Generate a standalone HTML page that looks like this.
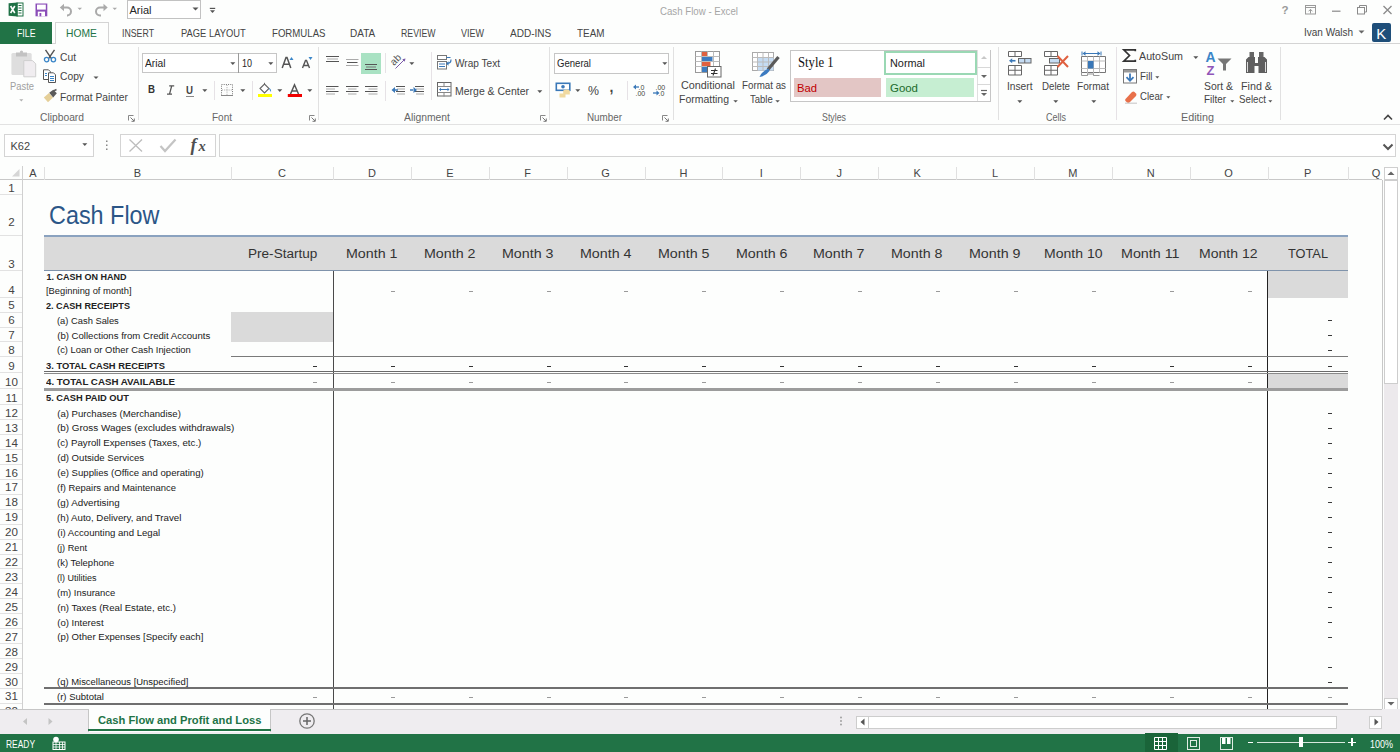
<!DOCTYPE html>
<html><head><meta charset="utf-8"><title>Cash Flow - Excel</title>
<style>
html,body{margin:0;padding:0;}
body{width:1400px;height:752px;position:relative;overflow:hidden;background:#fdfefd;font-family:'Liberation Sans',sans-serif;}
svg{overflow:visible}
</style></head><body>
<div style="position:absolute;left:660.00px;top:5.89px;line-height:11px;font-size:11px;font-family:'Liberation Sans',sans-serif;font-weight:normal;color:#a6a6a6;white-space:pre;transform:scaleX(0.8800);transform-origin:0 0;">Cash Flow - Excel</div>
<div style="position:absolute;left:127px;top:0px;width:74px;height:19px;box-sizing:border-box;border:1px solid #c2c2c2;background:#fff"></div>
<svg style="position:absolute;left:192px;top:7px" width="8" height="4" viewBox="0 0 8 4"><path d="M0.5 0.5h6l-3 3z" fill="#555"/></svg>
<svg style="position:absolute;left:8px;top:2px" width="16" height="15" viewBox="0 0 16 15"><rect x="9" y="1" width="6" height="13" fill="#fff" stroke="#1e7145" stroke-width="1"/><path d="M10.5 3.5h3M10.5 6h3M10.5 8.5h3M10.5 11h3" stroke="#1e7145" stroke-width="1.2"/><path d="M0.6 1.2 L9.6 0.4 V14.6 L0.6 13.8 Z" fill="#1e7145"/><path d="M2.6 4 L6.8 11 M6.8 4 L2.6 11" stroke="#fff" stroke-width="1.6"/></svg>
<svg style="position:absolute;left:35px;top:3px" width="13" height="14" viewBox="0 0 13 14"><path d="M0.5 0.5 H12.3 V13.3 H0.5 Z" fill="#8a4db8"/><rect x="2" y="1.6" width="8.8" height="5" fill="#fff"/><rect x="2.8" y="8.6" width="7.2" height="4.7" fill="#fff"/><rect x="4.5" y="10" width="1.8" height="3.3" fill="#8a4db8"/></svg>
<svg style="position:absolute;left:59px;top:3px" width="15" height="13" viewBox="0 0 15 13"><path d="M3 4.5 H8 A4 4 0 0 1 8 12.5 H9" fill="none" stroke="#aaa" stroke-width="2"/><path d="M0.8 4.5 L5 0.8 V8.2 Z" fill="#aaa"/></svg>
<svg style="position:absolute;left:77px;top:7px" width="6" height="4" viewBox="0 0 6 4"><path d="M0.5 0.8h4.5l-2.25 2.2z" fill="#aaa"/></svg>
<svg style="position:absolute;left:94px;top:3px" width="15" height="13" viewBox="0 0 15 13"><path d="M11 4.5 H6 A4 4 0 0 0 6 12.5 H7" fill="none" stroke="#aaa" stroke-width="2"/><path d="M13.7 4.5 L9.5 0.8 V8.2 Z" fill="#aaa"/></svg>
<svg style="position:absolute;left:112px;top:7px" width="6" height="4" viewBox="0 0 6 4"><path d="M0.5 0.8h4.5l-2.25 2.2z" fill="#aaa"/></svg>
<svg style="position:absolute;left:209px;top:7px" width="7" height="7" viewBox="0 0 7 7"><rect x="0.8" y="0.8" width="5.4" height="1.2" fill="#555"/><path d="M1 3.2h5l-2.5 2.8z" fill="#555"/></svg>
<svg style="position:absolute;left:1300px;top:3px" width="100" height="14" viewBox="0 0 100 14"><rect x="5.5" y="2.5" width="10" height="8.5" fill="none" stroke="#9a9a9a" stroke-width="1"/><path d="M5.5 4.5h10" stroke="#9a9a9a"/><path d="M10.5 10.5v-4M8.6 8.3l1.9-2 1.9 2" fill="none" stroke="#9a9a9a"/><path d="M32 8.2h8.5" stroke="#8a8a8a" stroke-width="1.2"/><rect x="57.5" y="4.5" width="7" height="6.5" fill="none" stroke="#8a8a8a"/><path d="M59.5 4.5v-2h7v6.5h-2" fill="none" stroke="#8a8a8a"/><path d="M83.5 3 L91.5 11 M91.5 3 L83.5 11" stroke="#8a8a8a" stroke-width="1.3"/></svg>
<div style="position:absolute;left:129.50px;top:4.69px;line-height:11px;font-size:11px;font-family:'Liberation Sans',sans-serif;font-weight:normal;color:#262626;white-space:pre;">Arial</div>
<div style="position:absolute;left:1281.48px;top:4.77px;line-height:11.5px;font-size:11.5px;font-family:'Liberation Sans',sans-serif;font-weight:bold;color:#9a9a9a;white-space:pre;">?</div>
<svg style="position:absolute;left:1358px;top:30px" width="8" height="4" viewBox="0 0 8 4"><path d="M0.5 0.5h6l-3 3z" fill="#666"/></svg>
<div style="position:absolute;left:0px;top:43px;width:1400px;height:1px;background:#d4d4d4"></div>
<div style="position:absolute;left:0px;top:22px;width:52px;height:21.5px;background:#217346"></div>
<div style="position:absolute;left:55px;top:22px;width:54px;height:22px;box-sizing:border-box;border:1px solid #d4d4d4;border-bottom:none;background:#fdfefd"></div>
<div style="position:absolute;left:16.50px;top:27.69px;line-height:11px;font-size:11px;font-family:'Liberation Sans',sans-serif;font-weight:normal;color:#fff;white-space:pre;transform:scaleX(0.7962);transform-origin:0 0;">FILE</div>
<div style="position:absolute;left:66.30px;top:27.69px;line-height:11px;font-size:11px;font-family:'Liberation Sans',sans-serif;font-weight:normal;color:#217346;white-space:pre;transform:scaleX(0.9333);transform-origin:0 0;">HOME</div>
<div style="position:absolute;left:122.30px;top:27.69px;line-height:11px;font-size:11px;font-family:'Liberation Sans',sans-serif;font-weight:normal;color:#444;white-space:pre;transform:scaleX(0.7972);transform-origin:0 0;">INSERT</div>
<div style="position:absolute;left:180.60px;top:27.69px;line-height:11px;font-size:11px;font-family:'Liberation Sans',sans-serif;font-weight:normal;color:#444;white-space:pre;transform:scaleX(0.8511);transform-origin:0 0;">PAGE LAYOUT</div>
<div style="position:absolute;left:271.50px;top:27.69px;line-height:11px;font-size:11px;font-family:'Liberation Sans',sans-serif;font-weight:normal;color:#444;white-space:pre;transform:scaleX(0.8753);transform-origin:0 0;">FORMULAS</div>
<div style="position:absolute;left:349.90px;top:27.69px;line-height:11px;font-size:11px;font-family:'Liberation Sans',sans-serif;font-weight:normal;color:#444;white-space:pre;transform:scaleX(0.9091);transform-origin:0 0;">DATA</div>
<div style="position:absolute;left:400.90px;top:27.69px;line-height:11px;font-size:11px;font-family:'Liberation Sans',sans-serif;font-weight:normal;color:#444;white-space:pre;transform:scaleX(0.7948);transform-origin:0 0;">REVIEW</div>
<div style="position:absolute;left:461.20px;top:27.69px;line-height:11px;font-size:11px;font-family:'Liberation Sans',sans-serif;font-weight:normal;color:#444;white-space:pre;transform:scaleX(0.8178);transform-origin:0 0;">VIEW</div>
<div style="position:absolute;left:510.00px;top:27.69px;line-height:11px;font-size:11px;font-family:'Liberation Sans',sans-serif;font-weight:normal;color:#444;white-space:pre;transform:scaleX(0.9130);transform-origin:0 0;">ADD-INS</div>
<div style="position:absolute;left:577.00px;top:27.69px;line-height:11px;font-size:11px;font-family:'Liberation Sans',sans-serif;font-weight:normal;color:#444;white-space:pre;transform:scaleX(0.8998);transform-origin:0 0;">TEAM</div>
<div style="position:absolute;left:1304.00px;top:26.69px;line-height:11px;font-size:11px;font-family:'Liberation Sans',sans-serif;font-weight:normal;color:#444;white-space:pre;transform:scaleX(0.9071);transform-origin:0 0;">Ivan Walsh</div>
<div style="position:absolute;left:1372px;top:23px;width:18.5px;height:19px;background:#1e4e79;border-radius:2px"></div>
<div style="position:absolute;left:1376.20px;top:25.80px;line-height:15px;font-size:15px;font-family:'Liberation Sans',sans-serif;font-weight:normal;color:#fff;white-space:pre;">K</div>
<div style="position:absolute;left:0px;top:124px;width:1400px;height:1px;background:#e2e2e2"></div>
<div style="position:absolute;left:137.5px;top:47px;width:1px;height:73px;background:#e1e1e1"></div>
<div style="position:absolute;left:318px;top:47px;width:1px;height:73px;background:#e1e1e1"></div>
<div style="position:absolute;left:549px;top:47px;width:1px;height:73px;background:#e1e1e1"></div>
<div style="position:absolute;left:672.5px;top:47px;width:1px;height:73px;background:#e1e1e1"></div>
<div style="position:absolute;left:997.5px;top:47px;width:1px;height:73px;background:#e1e1e1"></div>
<div style="position:absolute;left:1116px;top:47px;width:1px;height:73px;background:#e1e1e1"></div>
<div style="position:absolute;left:1279.5px;top:47px;width:1px;height:73px;background:#e1e1e1"></div>
<div style="position:absolute;left:40.00px;top:111.99px;line-height:11px;font-size:11px;font-family:'Liberation Sans',sans-serif;font-weight:normal;color:#666;white-space:pre;transform:scaleX(0.9343);transform-origin:0 0;">Clipboard</div>
<div style="position:absolute;left:212.00px;top:111.99px;line-height:11px;font-size:11px;font-family:'Liberation Sans',sans-serif;font-weight:normal;color:#666;white-space:pre;transform:scaleX(0.9084);transform-origin:0 0;">Font</div>
<div style="position:absolute;left:404.00px;top:111.99px;line-height:11px;font-size:11px;font-family:'Liberation Sans',sans-serif;font-weight:normal;color:#666;white-space:pre;transform:scaleX(0.9403);transform-origin:0 0;">Alignment</div>
<div style="position:absolute;left:587.00px;top:111.99px;line-height:11px;font-size:11px;font-family:'Liberation Sans',sans-serif;font-weight:normal;color:#666;white-space:pre;transform:scaleX(0.8946);transform-origin:0 0;">Number</div>
<div style="position:absolute;left:822.00px;top:111.99px;line-height:11px;font-size:11px;font-family:'Liberation Sans',sans-serif;font-weight:normal;color:#666;white-space:pre;transform:scaleX(0.8008);transform-origin:0 0;">Styles</div>
<div style="position:absolute;left:1046.00px;top:111.99px;line-height:11px;font-size:11px;font-family:'Liberation Sans',sans-serif;font-weight:normal;color:#666;white-space:pre;transform:scaleX(0.8179);transform-origin:0 0;">Cells</div>
<div style="position:absolute;left:1181.00px;top:111.99px;line-height:11px;font-size:11px;font-family:'Liberation Sans',sans-serif;font-weight:normal;color:#666;white-space:pre;transform:scaleX(0.9810);transform-origin:0 0;">Editing</div>
<div style="position:absolute;left:10.00px;top:80.69px;line-height:11px;font-size:11px;font-family:'Liberation Sans',sans-serif;font-weight:normal;color:#a0a0a0;white-space:pre;transform:scaleX(0.8529);transform-origin:0 0;">Paste</div>
<svg style="position:absolute;left:10px;top:50px" width="28" height="28" viewBox="0 0 28 28"><rect x="1.4" y="3" width="20.3" height="22" rx="1.5" fill="#dedede"/><path d="M6 2.5 H17 V6.5 H6 Z" fill="#c2c2c2"/><circle cx="11.5" cy="2" r="1.6" fill="#c2c2c2"/><path d="M13.8 10.6 H22.5 L25.7 13.8 V26.8 H13.8 Z" fill="#f0edf0" stroke="#cfcfcf" stroke-width="1"/></svg>
<svg style="position:absolute;left:19px;top:99px" width="5" height="3" viewBox="0 0 5 3"><path d="M0.3 0.3h4l-2 2.2z" fill="#b0b0b0"/></svg>
<svg style="position:absolute;left:43px;top:49px" width="15" height="14" viewBox="0 0 15 14"><path d="M2.5 0.8 L8.5 9.6 M11.5 0.8 L5.5 9.6" stroke="#555" stroke-width="1.4"/><circle cx="3.6" cy="10.6" r="2.2" fill="none" stroke="#3a86c8" stroke-width="1.3"/><circle cx="10.4" cy="10.6" r="2.2" fill="none" stroke="#3a86c8" stroke-width="1.3"/></svg>
<svg style="position:absolute;left:43px;top:69px" width="15" height="15" viewBox="0 0 15 15"><path d="M0.5 0.8 H5.5 L7.5 2.8 V10.5 H0.5 Z" fill="#fff" stroke="#555" stroke-width="1"/><path d="M2 4.5h2M2 6.5h2" stroke="#3a86c8"/><path d="M5.5 3.8 H10.5 L12.5 5.8 V13.5 H5.5 Z" fill="#fff" stroke="#555" stroke-width="1"/><path d="M7 7.5h4M7 9.5h4M7 11.5h4" stroke="#3a86c8"/></svg>
<svg style="position:absolute;left:93px;top:76px" width="6" height="4" viewBox="0 0 6 4"><path d="M0.5 0.5h5l-2.5 2.6z" fill="#555"/></svg>
<svg style="position:absolute;left:43px;top:89px" width="16" height="14" viewBox="0 0 16 14"><path d="M0.8 8.5 L6 4 L10 8.5 L5 13.2 Z" fill="#e5cf98"/><path d="M6.2 3.8 L10.3 0.8 L13.8 4.2 L10.2 8.6 Z" fill="#5a5a5a"/><path d="M10.5 2 L13.5 0.5" stroke="#5a5a5a" stroke-width="1.5"/></svg>
<div style="position:absolute;left:60.00px;top:51.69px;line-height:11px;font-size:11px;font-family:'Liberation Sans',sans-serif;font-weight:normal;color:#444;white-space:pre;transform:scaleX(0.9343);transform-origin:0 0;">Cut</div>
<div style="position:absolute;left:60.00px;top:71.49px;line-height:11px;font-size:11px;font-family:'Liberation Sans',sans-serif;font-weight:normal;color:#444;white-space:pre;transform:scaleX(0.9343);transform-origin:0 0;">Copy</div>
<div style="position:absolute;left:60.00px;top:91.69px;line-height:11px;font-size:11px;font-family:'Liberation Sans',sans-serif;font-weight:normal;color:#444;white-space:pre;transform:scaleX(0.9347);transform-origin:0 0;">Format Painter</div>
<div style="position:absolute;left:142px;top:53px;width:96.5px;height:20px;box-sizing:border-box;border:1px solid #c6c6c6;background:#fff"></div>
<div style="position:absolute;left:237.5px;top:53px;width:39px;height:20px;box-sizing:border-box;border:1px solid #c6c6c6;background:#fff"></div>
<div style="position:absolute;left:145.00px;top:57.69px;line-height:11px;font-size:11px;font-family:'Liberation Sans',sans-serif;font-weight:normal;color:#262626;white-space:pre;transform:scaleX(0.9312);transform-origin:0 0;">Arial</div>
<div style="position:absolute;left:242.00px;top:58.19px;line-height:11px;font-size:11px;font-family:'Liberation Sans',sans-serif;font-weight:normal;color:#262626;white-space:pre;transform:scaleX(0.8163);transform-origin:0 0;">10</div>
<div style="position:absolute;left:238px;top:53px;width:1.2px;height:20px;background:#9a9a9a"></div>
<svg style="position:absolute;left:230px;top:62px" width="6" height="4" viewBox="0 0 6 4"><path d="M0.3 0.3h5l-2.5 2.6z" fill="#555"/></svg>
<svg style="position:absolute;left:267.5px;top:62px" width="6" height="4" viewBox="0 0 6 4"><path d="M0.3 0.3h5l-2.5 2.6z" fill="#555"/></svg>
<svg style="position:absolute;left:281px;top:56px" width="14" height="13" viewBox="0 0 14 13"><path d="M1.2 12 L5 1.5 H6 L9.8 12 M2.8 8.2 H8.2" fill="none" stroke="#555" stroke-width="1.5"/><path d="M8.5 4 L10.5 1 L12.5 4 Z" fill="#3a86c8"/></svg>
<svg style="position:absolute;left:301px;top:56px" width="14" height="13" viewBox="0 0 14 13"><path d="M1.5 12 L4.5 4.5 H5.5 L8.5 12 M2.7 9.5 H7.3" fill="none" stroke="#555" stroke-width="1.4"/><path d="M7.5 1 H11.5 L9.5 4 Z" fill="#3a86c8"/></svg>
<div style="position:absolute;left:147.50px;top:84.27px;line-height:11.5px;font-size:11.5px;font-family:'Liberation Sans',sans-serif;font-weight:bold;color:#333;white-space:pre;transform:scaleX(0.8421);transform-origin:0 0;">B</div>
<svg style="position:absolute;left:166px;top:85px" width="9" height="10" viewBox="0 0 9 10"><path d="M3.2 0.8 H8.2 M1 9.2 H6 M5.7 0.8 L3.5 9.2" fill="none" stroke="#555" stroke-width="1.3"/></svg>
<div style="position:absolute;left:186.00px;top:84.69px;line-height:11px;font-size:11px;font-family:'Liberation Sans',sans-serif;font-weight:bold;color:#444;white-space:pre;transform:scaleX(0.8802);transform-origin:0 0;">U</div>
<div style="position:absolute;left:185.5px;top:95.5px;width:8px;height:1px;background:#888"></div>
<svg style="position:absolute;left:202px;top:89px" width="6" height="4" viewBox="0 0 6 4"><path d="M0.3 0.3h5l-2.5 2.6z" fill="#555"/></svg>
<svg style="position:absolute;left:239.5px;top:89px" width="6" height="4" viewBox="0 0 6 4"><path d="M0.3 0.3h5l-2.5 2.6z" fill="#555"/></svg>
<svg style="position:absolute;left:277px;top:89px" width="6" height="4" viewBox="0 0 6 4"><path d="M0.3 0.3h5l-2.5 2.6z" fill="#555"/></svg>
<svg style="position:absolute;left:307px;top:89px" width="6" height="4" viewBox="0 0 6 4"><path d="M0.3 0.3h5l-2.5 2.6z" fill="#555"/></svg>
<div style="position:absolute;left:213.5px;top:81px;width:1px;height:19px;background:#e6e2e6"></div>
<div style="position:absolute;left:251.5px;top:81px;width:1px;height:19px;background:#e6e2e6"></div>
<svg style="position:absolute;left:220px;top:83px" width="14" height="14" viewBox="0 0 14 14"><rect x="1.5" y="1.5" width="11" height="11" fill="none" stroke="#777" stroke-dasharray="1 1.2"/><path d="M7 2v10M2 7h10" stroke="#aaa" stroke-dasharray="1 1.2"/><path d="M1 12.5h12" stroke="#888"/></svg>
<svg style="position:absolute;left:257px;top:82px" width="18" height="16" viewBox="0 0 18 16"><path d="M3 6.5 L7.5 2 L12 6.5 L7.5 11 Z" fill="#fff" stroke="#666" stroke-width="1.1"/><path d="M7.5 2 V0.8" stroke="#666"/><path d="M12 6 Q14.5 7 14 10 Q12.5 8.5 12 6Z" fill="#3a86c8"/><rect x="1" y="12" width="14" height="3" fill="#ffff00"/></svg>
<svg style="position:absolute;left:287px;top:84px" width="16" height="14" viewBox="0 0 16 14"><path d="M3.5 10 L7.5 0.8 L11.5 10 M5 7 H10" fill="none" stroke="#555" stroke-width="1.5"/><rect x="0.8" y="10" width="14.2" height="3" fill="#f00000"/></svg>
<div style="position:absolute;left:361px;top:53px;width:20px;height:20.5px;background:#a9e2c3"></div>
<svg style="position:absolute;left:326px;top:55px" width="13" height="12" viewBox="0 0 13 12"><path d="M0 1.5h13M0 6.5h13" stroke="#555" stroke-width="1"/><path d="M1 4h11" stroke="#aaa" stroke-width="1"/></svg>
<svg style="position:absolute;left:345.5px;top:58px" width="13" height="12" viewBox="0 0 13 12"><path d="M0 1.5h12.5M0 7.5h12.5" stroke="#aaa"/><path d="M1 4.5h10.5" stroke="#555"/></svg>
<svg style="position:absolute;left:365px;top:63px" width="13" height="8" viewBox="0 0 13 8"><path d="M0 1.5h12M0 6.5h12" stroke="#555"/><path d="M1 4h10" stroke="#777"/></svg>
<svg style="position:absolute;left:326px;top:85px" width="13" height="10" viewBox="0 0 13 10"><path d="M0 1.5h12.5M0 6.5h12.5" stroke="#555"/><path d="M0 4h9M0 9h9" stroke="#aaa"/></svg>
<svg style="position:absolute;left:345.5px;top:85px" width="13" height="10" viewBox="0 0 13 10"><path d="M0 1.5h12.5M0 6.5h12.5" stroke="#555"/><path d="M2 4h8.5M2 9h8.5" stroke="#aaa"/></svg>
<svg style="position:absolute;left:365px;top:85px" width="13" height="10" viewBox="0 0 13 10"><path d="M0 1.5h12.5M0 6.5h12.5" stroke="#555"/><path d="M3.5 4h9M3.5 9h9" stroke="#aaa"/></svg>
<div style="position:absolute;left:384.5px;top:53px;width:1px;height:20px;background:#e6e2e6"></div>
<div style="position:absolute;left:384.5px;top:81px;width:1px;height:20px;background:#e6e2e6"></div>
<div style="position:absolute;left:430.5px;top:52px;width:1px;height:48px;background:#e6e2e6"></div>
<svg style="position:absolute;left:390px;top:54px" width="18" height="16" viewBox="0 0 18 16"><text x="0" y="0" font-family="Liberation Sans" font-size="10" fill="#555" transform="translate(4,12) rotate(-45)">ab</text><path d="M5.5 14.5 L14.5 5.5" stroke="#7a5aa8" stroke-width="1"/><path d="M15.5 4.5 L12.3 5.3 L14.7 7.7Z" fill="#7a5aa8"/></svg>
<svg style="position:absolute;left:408.5px;top:62px" width="6" height="4" viewBox="0 0 6 4"><path d="M0.3 0.3h5l-2.5 2.6z" fill="#555"/></svg>
<svg style="position:absolute;left:391px;top:85px" width="14" height="10" viewBox="0 0 14 10"><path d="M5 1.5h9M5 6.5h9" stroke="#555"/><path d="M6 4h8M6 9h8" stroke="#aaa"/><path d="M0.5 5 L4 2 V8 Z M3 4.2h4v1.6h-4z" fill="#3a78b8"/></svg>
<svg style="position:absolute;left:410px;top:85px" width="14" height="10" viewBox="0 0 14 10"><path d="M5 1.5h9M5 6.5h9" stroke="#555"/><path d="M6 4h8M6 9h8" stroke="#aaa"/><path d="M7 5 L3.5 2 V8 Z M0 4.2h4v1.6h-4z" fill="#3a78b8"/></svg>
<svg style="position:absolute;left:437px;top:55px" width="16" height="15" viewBox="0 0 16 15"><rect x="0.5" y="0.5" width="9" height="4" fill="#fff" stroke="#777"/><path d="M9.5 2.5h4" stroke="#3a78b8"/><rect x="0.5" y="6.5" width="9" height="7.5" fill="#fff" stroke="#777"/><path d="M2 9h6M2 11.5h6" stroke="#3a78b8"/><path d="M14 4.5 Q14 8.5 10 8.5" fill="none" stroke="#3a78b8" stroke-width="1.2"/><path d="M9 8.5 L11.5 6.3 V10.7Z" fill="#3a78b8"/></svg>
<svg style="position:absolute;left:437px;top:82px" width="15" height="15" viewBox="0 0 15 15"><rect x="0.5" y="0.5" width="13.5" height="13.5" fill="#fff" stroke="#666"/><path d="M0.5 4.5h13.5M0.5 10.5h13.5M7 0.5v4M7 10.5v4" stroke="#888"/><path d="M3 7.5h8.5" stroke="#3a78b8"/><path d="M2 7.5 L4 5.8V9.2Z M12.5 7.5 L10.5 5.8 V9.2Z" fill="#3a78b8"/></svg>
<svg style="position:absolute;left:537px;top:89.5px" width="6" height="4" viewBox="0 0 6 4"><path d="M0.3 0.3h5l-2.5 2.6z" fill="#555"/></svg>
<div style="position:absolute;left:454.50px;top:58.09px;line-height:11px;font-size:11px;font-family:'Liberation Sans',sans-serif;font-weight:normal;color:#444;white-space:pre;transform:scaleX(0.9160);transform-origin:0 0;">Wrap Text</div>
<div style="position:absolute;left:455.00px;top:85.69px;line-height:11px;font-size:11px;font-family:'Liberation Sans',sans-serif;font-weight:normal;color:#444;white-space:pre;transform:scaleX(0.9529);transform-origin:0 0;">Merge &amp; Center</div>
<div style="position:absolute;left:554px;top:53px;width:114.5px;height:20.5px;box-sizing:border-box;border:1px solid #c6c6c6;background:#fff"></div>
<div style="position:absolute;left:557.00px;top:57.69px;line-height:11px;font-size:11px;font-family:'Liberation Sans',sans-serif;font-weight:normal;color:#262626;white-space:pre;transform:scaleX(0.8687);transform-origin:0 0;">General</div>
<div style="position:absolute;left:588.20px;top:84.92px;line-height:12.5px;font-size:12.5px;font-family:'Liberation Sans',sans-serif;font-weight:normal;color:#444;white-space:pre;transform:scaleX(0.9888);transform-origin:0 0;">%</div>
<svg style="position:absolute;left:661.5px;top:62px" width="6" height="4" viewBox="0 0 6 4"><path d="M0.3 0.3h5l-2.5 2.6z" fill="#555"/></svg>
<svg style="position:absolute;left:555px;top:82px" width="17" height="16" viewBox="0 0 17 16"><rect x="1.3" y="1.3" width="13.5" height="7" fill="#fff" stroke="#3a78b8" stroke-width="1.6"/><circle cx="8" cy="4.8" r="1.8" fill="#3a78b8"/><ellipse cx="11.5" cy="9" rx="3.3" ry="1.6" fill="#f0d9a0"/><rect x="8.2" y="9" width="6.6" height="3.5" fill="#f0d9a0"/><rect x="4.5" y="11.5" width="6" height="4" fill="#f0d9a0"/></svg>
<svg style="position:absolute;left:575px;top:89px" width="6" height="4" viewBox="0 0 6 4"><path d="M0.3 0.3h5l-2.5 2.6z" fill="#555"/></svg>
<div style="position:absolute;left:609.50px;top:80.15px;line-height:14px;font-size:14px;font-family:'Liberation Sans',sans-serif;font-weight:bold;color:#444;white-space:pre;">,</div>
<div style="position:absolute;left:626.5px;top:81px;width:1px;height:19px;background:#e6e2e6"></div>
<svg style="position:absolute;left:632px;top:84px" width="15" height="13" viewBox="0 0 15 13"><text x="6.5" y="5.8" font-family="Liberation Sans" font-size="7" fill="#444">.0</text><text x="3.5" y="11.8" font-family="Liberation Sans" font-size="7" fill="#444">.00</text><path d="M1 3 L4 0.6 V5.4Z" fill="#3a78b8"/><path d="M3 3h4" stroke="#3a78b8" stroke-width="1.3"/></svg>
<svg style="position:absolute;left:652px;top:84px" width="15" height="13" viewBox="0 0 15 13"><text x="3.5" y="5.8" font-family="Liberation Sans" font-size="7" fill="#444">.00</text><text x="6.5" y="11.8" font-family="Liberation Sans" font-size="7" fill="#444">.0</text><path d="M7.5 9 L4.5 6.6 V11.4Z" fill="#3a78b8"/><path d="M1 9h4" stroke="#3a78b8" stroke-width="1.3"/></svg>
<svg style="position:absolute;left:128px;top:115px" width="7" height="7" viewBox="0 0 7 7"><path d="M0.5 5.5V0.5H5.5" fill="none" stroke="#888"/><path d="M2.5 2.5 L6 6 M6.3 3.5 V6.3 H3.5" fill="none" stroke="#777" stroke-width="1"/></svg>
<svg style="position:absolute;left:309px;top:115px" width="7" height="7" viewBox="0 0 7 7"><path d="M0.5 5.5V0.5H5.5" fill="none" stroke="#888"/><path d="M2.5 2.5 L6 6 M6.3 3.5 V6.3 H3.5" fill="none" stroke="#777" stroke-width="1"/></svg>
<svg style="position:absolute;left:540px;top:115px" width="7" height="7" viewBox="0 0 7 7"><path d="M0.5 5.5V0.5H5.5" fill="none" stroke="#888"/><path d="M2.5 2.5 L6 6 M6.3 3.5 V6.3 H3.5" fill="none" stroke="#777" stroke-width="1"/></svg>
<svg style="position:absolute;left:662px;top:115px" width="7" height="7" viewBox="0 0 7 7"><path d="M0.5 5.5V0.5H5.5" fill="none" stroke="#888"/><path d="M2.5 2.5 L6 6 M6.3 3.5 V6.3 H3.5" fill="none" stroke="#777" stroke-width="1"/></svg>
<svg style="position:absolute;left:695px;top:51px" width="28" height="28" viewBox="0 0 28 28"><rect x="0.5" y="0.5" width="24" height="21" fill="#fff" stroke="#999"/><path d="M6.5 0.5v21M12.5 0.5v21M18.5 0.5v21M0.5 5.5h24M0.5 10.5h24M0.5 15.5h24" stroke="#bbb"/><rect x="7" y="1" width="5" height="4" fill="#e0603f"/><rect x="7" y="6" width="10.5" height="4" fill="#3c7bc0"/><rect x="7" y="11" width="8.5" height="4" fill="#e0603f"/><rect x="7" y="16" width="5" height="5" fill="#3c7bc0"/><rect x="12.5" y="15.5" width="13.5" height="10.5" fill="#fff" stroke="#666"/><path d="M16 19.5h6.5M16 22.5h6.5M20.5 17.5 L18 24.5" stroke="#333" stroke-width="1.1"/></svg>
<svg style="position:absolute;left:732.5px;top:99.5px" width="6" height="4" viewBox="0 0 6 4"><path d="M0.3 0.3h4.5l-2.25 2.3z" fill="#555"/></svg>
<svg style="position:absolute;left:752px;top:52px" width="28" height="27" viewBox="0 0 28 27"><rect x="0.5" y="0.5" width="21" height="18" fill="#fff" stroke="#aaa"/><rect x="6" y="5.5" width="15.5" height="13" fill="#c5dcf3"/><path d="M5.5 0.5v18M11 0.5v18M16.5 0.5v18M0.5 5.5h21M0.5 10h21M0.5 14.5h21" stroke="#bbb"/><path d="M26.5 5 L16 17.5" stroke="#5a5a5a" stroke-width="3.2"/><path d="M16.5 16.5 Q10 19 7.5 25 Q14 24 17.5 19 Z" fill="#3c7bc0"/></svg>
<svg style="position:absolute;left:775px;top:99.5px" width="6" height="4" viewBox="0 0 6 4"><path d="M0.3 0.3h4.5l-2.25 2.3z" fill="#555"/></svg>
<div style="position:absolute;left:680.70px;top:80.49px;line-height:11px;font-size:11px;font-family:'Liberation Sans',sans-serif;font-weight:normal;color:#444;white-space:pre;transform:scaleX(0.9810);transform-origin:0 0;">Conditional</div>
<div style="position:absolute;left:678.60px;top:94.49px;line-height:11px;font-size:11px;font-family:'Liberation Sans',sans-serif;font-weight:normal;color:#444;white-space:pre;transform:scaleX(0.9510);transform-origin:0 0;">Formatting</div>
<div style="position:absolute;left:742.00px;top:80.49px;line-height:11px;font-size:11px;font-family:'Liberation Sans',sans-serif;font-weight:normal;color:#444;white-space:pre;transform:scaleX(0.8886);transform-origin:0 0;">Format as</div>
<div style="position:absolute;left:749.70px;top:94.49px;line-height:11px;font-size:11px;font-family:'Liberation Sans',sans-serif;font-weight:normal;color:#444;white-space:pre;transform:scaleX(0.8632);transform-origin:0 0;">Table</div>
<div style="position:absolute;left:790px;top:49.5px;width:200.5px;height:52px;box-sizing:border-box;border:1px solid #c6c6c6;background:#fff"></div>
<div style="position:absolute;left:797.50px;top:54.66px;line-height:14.5px;font-size:14.5px;font-family:'Liberation Serif',serif;font-weight:normal;color:#111;white-space:pre;transform:scaleX(0.8725);transform-origin:0 0;">Style 1</div>
<div style="position:absolute;left:884px;top:51px;width:92.5px;height:24px;box-sizing:border-box;border:2px solid #9ad8b4;background:#fff"></div>
<div style="position:absolute;left:890.00px;top:57.69px;line-height:11px;font-size:11px;font-family:'Liberation Sans',sans-serif;font-weight:normal;color:#222;white-space:pre;transform:scaleX(0.9872);transform-origin:0 0;">Normal</div>
<div style="position:absolute;left:794px;top:78px;width:87px;height:19px;background:#e3c6c5"></div>
<div style="position:absolute;left:797.00px;top:82.69px;line-height:11px;font-size:11px;font-family:'Liberation Sans',sans-serif;font-weight:normal;color:#c00000;white-space:pre;transform:scaleX(1.0215);transform-origin:0 0;">Bad</div>
<div style="position:absolute;left:886px;top:78px;width:88px;height:19px;background:#c6eed2"></div>
<div style="position:absolute;left:890.00px;top:82.69px;line-height:11px;font-size:11px;font-family:'Liberation Sans',sans-serif;font-weight:normal;color:#1c6b2c;white-space:pre;transform:scaleX(1.0400);transform-origin:0 0;">Good</div>
<div style="position:absolute;left:977px;top:50px;width:13px;height:51px;box-sizing:border-box;border-left:1px solid #e0e0e0;background:#fff"></div>
<div style="position:absolute;left:977px;top:67px;width:13px;height:1px;background:#d8d8d8"></div>
<div style="position:absolute;left:977px;top:84px;width:13px;height:1px;background:#d8d8d8"></div>
<svg style="position:absolute;left:980px;top:55px" width="8" height="5" viewBox="0 0 8 5"><path d="M1 4 L4 1 L7 4Z" fill="#c8c8c8"/></svg>
<svg style="position:absolute;left:980px;top:74px" width="8" height="5" viewBox="0 0 8 5"><path d="M1 1 L4 4 L7 1Z" fill="#666"/></svg>
<svg style="position:absolute;left:980px;top:89px" width="8" height="8" viewBox="0 0 8 8"><path d="M1 1.5h6" stroke="#666" stroke-width="1.2"/><path d="M1 4 L4 7 L7 4Z" fill="#666"/></svg>
<div style="position:absolute;left:1006.50px;top:80.69px;line-height:11px;font-size:11px;font-family:'Liberation Sans',sans-serif;font-weight:normal;color:#444;white-space:pre;transform:scaleX(0.9267);transform-origin:0 0;">Insert</div>
<div style="position:absolute;left:1042.00px;top:80.69px;line-height:11px;font-size:11px;font-family:'Liberation Sans',sans-serif;font-weight:normal;color:#444;white-space:pre;transform:scaleX(0.8806);transform-origin:0 0;">Delete</div>
<div style="position:absolute;left:1077.00px;top:80.69px;line-height:11px;font-size:11px;font-family:'Liberation Sans',sans-serif;font-weight:normal;color:#444;white-space:pre;transform:scaleX(0.9184);transform-origin:0 0;">Format</div>
<svg style="position:absolute;left:1016.5px;top:99.5px" width="6" height="4" viewBox="0 0 6 4"><path d="M0.3 0.3h5l-2.5 2.6z" fill="#555"/></svg>
<svg style="position:absolute;left:1053px;top:99.5px" width="6" height="4" viewBox="0 0 6 4"><path d="M0.3 0.3h5l-2.5 2.6z" fill="#555"/></svg>
<svg style="position:absolute;left:1090.5px;top:99.5px" width="6" height="4" viewBox="0 0 6 4"><path d="M0.3 0.3h5l-2.5 2.6z" fill="#555"/></svg>
<svg style="position:absolute;left:1007.5px;top:50.5px" width="25" height="26" viewBox="0 0 25 26"><path d="M0.5 0.5h13v5h-13zM7 0.5v5" fill="#fff" stroke="#666"/><rect x="10.5" y="7.5" width="12.5" height="4.5" fill="#c5dcf3" stroke="#666"/><path d="M16.75 7.5v4.5" stroke="#666"/><path d="M1 9.75 L4.2 7.2 V12.3Z" fill="#3a78b8"/><path d="M3.5 9.75h4" stroke="#3a78b8" stroke-width="1.6"/><path d="M0.5 14.5h13v9.5h-13zM7 14.5v9.5M0.5 19.25h13" fill="#fff" stroke="#666"/></svg>
<svg style="position:absolute;left:1043.5px;top:50.5px" width="26" height="26" viewBox="0 0 26 26"><path d="M0.5 0.5h13v5h-13zM7 0.5v5" fill="#fff" stroke="#666"/><rect x="5.5" y="7.5" width="10" height="4.5" fill="#c5dcf3" stroke="#666"/><path d="M0.5 14.5h13v9.5h-13zM7 14.5v9.5M0.5 19.25h13" fill="#fff" stroke="#666"/><path d="M13.5 5 L24 16 M24 5 L13.5 16" stroke="#e0603f" stroke-width="2"/></svg>
<svg style="position:absolute;left:1080.5px;top:50px" width="26" height="28" viewBox="0 0 26 28"><path d="M1 1.5v4M20 1.5v4" stroke="#3a78b8"/><path d="M2 3.5h17" stroke="#3a78b8"/><path d="M1.5 3.5 L4.5 1.3V5.7Z M19.5 3.5 L16.5 1.3V5.7Z" fill="#3a78b8"/><path d="M0.5 6.5h24v16h-24z" fill="#fff" stroke="#777"/><path d="M6.5 6.5v19M12.5 6.5v19M18.5 6.5v16M0.5 11h24M0.5 18.5h24" stroke="#bbb"/><rect x="7" y="11" width="5.5" height="7.5" fill="#3a78b8"/><path d="M0.5 22.5v3h6v-1.5h6v1.5h6" fill="none" stroke="#999"/></svg>
<div style="position:absolute;left:1116px;top:47px;width:1px;height:73px;background:#e6e2e6"></div>
<svg style="position:absolute;left:1122px;top:48px" width="15" height="15" viewBox="0 0 15 15"><path d="M13.3 3.2 V1.8 H1.8 L7.5 7.5 L1.8 13.2 H13.3 V11.8" fill="none" stroke="#333" stroke-width="1.7"/></svg>
<svg style="position:absolute;left:1192.5px;top:56px" width="6" height="4" viewBox="0 0 6 4"><path d="M0.3 0.3h5l-2.5 2.6z" fill="#555"/></svg>
<svg style="position:absolute;left:1122.5px;top:68.5px" width="15" height="15" viewBox="0 0 15 15"><rect x="0.5" y="0.5" width="13" height="13.5" fill="#fff" stroke="#777"/><rect x="1" y="1" width="12" height="2.5" fill="#999"/><path d="M7 4.5v7" stroke="#3a78b8" stroke-width="1.8"/><path d="M3.5 8.2 L7 11.8 L10.5 8.2" fill="none" stroke="#3a78b8" stroke-width="1.8"/></svg>
<svg style="position:absolute;left:1155px;top:76px" width="5" height="3" viewBox="0 0 5 3"><path d="M0.3 0.3h4l-2 2.2z" fill="#555"/></svg>
<svg style="position:absolute;left:1123.5px;top:89.5px" width="14" height="14" viewBox="0 0 14 14"><path d="M1.5 9 L8 2 Q9.5 1 10.5 2 L12 3.5 Q13 4.5 12 6 L5.5 12.5 Q4 13.5 2.8 12.3 L1.5 11 Q0.6 10 1.5 9Z" fill="#e8704a"/><path d="M1 13.2h12" stroke="#ccc" stroke-width="1.2"/></svg>
<svg style="position:absolute;left:1165.5px;top:96px" width="5" height="3" viewBox="0 0 5 3"><path d="M0.3 0.3h4l-2 2.2z" fill="#555"/></svg>
<svg style="position:absolute;left:1205px;top:50px" width="28" height="26" viewBox="0 0 28 26"><text x="0.5" y="12" font-family="Liberation Sans" font-size="14" font-weight="bold" fill="#3a86c8">A</text><text x="1.5" y="24.5" font-family="Liberation Sans" font-size="13" font-weight="bold" fill="#9055b8">Z</text><path d="M12.5 8.5 H26.5 L21 14 V20.5 H18 V14 Z" fill="#777"/></svg>
<svg style="position:absolute;left:1244.5px;top:51px" width="25" height="23" viewBox="0 0 25 23"><path d="M4 1.5h4.5v5h1.5v-5h0 M14.5 1.5h4.5v5" fill="none"/><rect x="4.5" y="1" width="4.5" height="6" fill="#666"/><rect x="14" y="1" width="4.5" height="6" fill="#666"/><path d="M1 8.5 L3.5 6 H10 V12 H13 V6 H19.5 L22 8.5 V22 H13.5 V15 H9.5 V22 H1 Z" fill="#5f5f5f"/><path d="M2.5 11v10M20.5 11v10" stroke="#ddd" stroke-width="1"/></svg>
<svg style="position:absolute;left:1229.5px;top:100px" width="5" height="3" viewBox="0 0 5 3"><path d="M0.3 0.3h4l-2 2.2z" fill="#555"/></svg>
<svg style="position:absolute;left:1267.5px;top:100px" width="5" height="3" viewBox="0 0 5 3"><path d="M0.3 0.3h4l-2 2.2z" fill="#555"/></svg>
<svg style="position:absolute;left:1383px;top:114px" width="10" height="7" viewBox="0 0 10 7"><path d="M1 5.5 L5 1.5 L9 5.5" fill="none" stroke="#444" stroke-width="1.6"/></svg>
<div style="position:absolute;left:1139.00px;top:51.49px;line-height:11px;font-size:11px;font-family:'Liberation Sans',sans-serif;font-weight:normal;color:#444;white-space:pre;transform:scaleX(0.9724);transform-origin:0 0;">AutoSum</div>
<div style="position:absolute;left:1139.50px;top:71.09px;line-height:11px;font-size:11px;font-family:'Liberation Sans',sans-serif;font-weight:normal;color:#444;white-space:pre;transform:scaleX(0.8889);transform-origin:0 0;">Fill</div>
<div style="position:absolute;left:1139.50px;top:91.09px;line-height:11px;font-size:11px;font-family:'Liberation Sans',sans-serif;font-weight:normal;color:#444;white-space:pre;transform:scaleX(0.8746);transform-origin:0 0;">Clear</div>
<div style="position:absolute;left:1204.00px;top:80.69px;line-height:11px;font-size:11px;font-family:'Liberation Sans',sans-serif;font-weight:normal;color:#444;white-space:pre;transform:scaleX(0.9484);transform-origin:0 0;">Sort &amp;</div>
<div style="position:absolute;left:1204.00px;top:94.49px;line-height:11px;font-size:11px;font-family:'Liberation Sans',sans-serif;font-weight:normal;color:#444;white-space:pre;transform:scaleX(0.8997);transform-origin:0 0;">Filter</div>
<div style="position:absolute;left:1241.00px;top:80.69px;line-height:11px;font-size:11px;font-family:'Liberation Sans',sans-serif;font-weight:normal;color:#444;white-space:pre;transform:scaleX(0.9749);transform-origin:0 0;">Find &amp;</div>
<div style="position:absolute;left:1239.00px;top:94.49px;line-height:11px;font-size:11px;font-family:'Liberation Sans',sans-serif;font-weight:normal;color:#444;white-space:pre;transform:scaleX(0.8830);transform-origin:0 0;">Select</div>
<div style="position:absolute;left:4px;top:134px;width:90px;height:23px;box-sizing:border-box;border:1px solid #d4d4d4;background:#fff"></div>
<div style="position:absolute;left:10.50px;top:140.69px;line-height:11px;font-size:11px;font-family:'Liberation Sans',sans-serif;font-weight:normal;color:#444;white-space:pre;">K62</div>
<div style="position:absolute;left:120px;top:134px;width:96px;height:23px;box-sizing:border-box;border:1px solid #d4d4d4;background:#fff"></div>
<svg style="position:absolute;left:82px;top:143px" width="6" height="4" viewBox="0 0 6 4"><path d="M0.3 0.3h5l-2.5 2.6z" fill="#555"/></svg>
<svg style="position:absolute;left:105px;top:140px" width="4" height="11" viewBox="0 0 4 11"><rect x="1" y="0.5" width="1.5" height="1.5" fill="#888"/><rect x="1" y="4.5" width="1.5" height="1.5" fill="#888"/><rect x="1" y="8.5" width="1.5" height="1.5" fill="#888"/></svg>
<svg style="position:absolute;left:128px;top:138px" width="17" height="15" viewBox="0 0 17 15"><path d="M1.5 1.5 L14 13.5 M14 1.5 L1.5 13.5" stroke="#bdbdbd" stroke-width="1.3"/></svg>
<svg style="position:absolute;left:159px;top:138px" width="18" height="15" viewBox="0 0 18 15"><path d="M1.5 8 L6 13 L16.5 1.5" fill="none" stroke="#c4c4c4" stroke-width="2.2"/></svg>
<div style="position:absolute;left:190.50px;top:135.93px;line-height:18px;font-size:18px;font-family:'Liberation Serif',serif;font-weight:bold;color:#505050;white-space:pre;font-style:italic">f</div>
<div style="position:absolute;left:198.50px;top:138.86px;line-height:14.5px;font-size:14.5px;font-family:'Liberation Serif',serif;font-weight:bold;color:#505050;white-space:pre;font-style:italic">x</div>
<div style="position:absolute;left:219px;top:134px;width:1177px;height:23px;box-sizing:border-box;border:1px solid #d4d4d4;background:#fff"></div>
<svg style="position:absolute;left:1382px;top:143px" width="12" height="8" viewBox="0 0 12 8"><path d="M1.5 1.5 L6 6 L10.5 1.5" fill="none" stroke="#555" stroke-width="2"/></svg>
<div style="position:absolute;left:0px;top:166px;width:1381.5px;height:14px;background:#fdfefd"></div>
<div style="position:absolute;left:0px;top:179.2px;width:1382px;height:1px;background:#c8c8c8"></div>
<svg style="position:absolute;left:11px;top:168px" width="10" height="10" viewBox="0 0 10 10"><path d="M8.5 1 V8.5 H1 Z" fill="#d6d6d6"/></svg>
<div style="position:absolute;left:22px;top:166px;width:1px;height:543px;background:#d0d0d0"></div>
<div style="position:absolute;left:1381.5px;top:180px;width:1px;height:529px;background:#c8c8c8"></div>
<div style="position:absolute;left:29.33px;top:167.69px;line-height:11px;font-size:11px;font-family:'Liberation Sans',sans-serif;font-weight:normal;color:#444;white-space:pre;">A</div>
<div style="position:absolute;left:133.83px;top:167.69px;line-height:11px;font-size:11px;font-family:'Liberation Sans',sans-serif;font-weight:normal;color:#444;white-space:pre;">B</div>
<div style="position:absolute;left:44px;top:167px;width:1px;height:13px;background:#e0e0e0"></div>
<div style="position:absolute;left:278.02px;top:167.69px;line-height:11px;font-size:11px;font-family:'Liberation Sans',sans-serif;font-weight:normal;color:#444;white-space:pre;">C</div>
<div style="position:absolute;left:231px;top:167px;width:1px;height:13px;background:#e0e0e0"></div>
<div style="position:absolute;left:367.96px;top:167.69px;line-height:11px;font-size:11px;font-family:'Liberation Sans',sans-serif;font-weight:normal;color:#444;white-space:pre;">D</div>
<div style="position:absolute;left:333px;top:167px;width:1px;height:13px;background:#e0e0e0"></div>
<div style="position:absolute;left:446.14px;top:167.69px;line-height:11px;font-size:11px;font-family:'Liberation Sans',sans-serif;font-weight:normal;color:#444;white-space:pre;">E</div>
<div style="position:absolute;left:410.875px;top:167px;width:1px;height:13px;background:#e0e0e0"></div>
<div style="position:absolute;left:524.32px;top:167.69px;line-height:11px;font-size:11px;font-family:'Liberation Sans',sans-serif;font-weight:normal;color:#444;white-space:pre;">F</div>
<div style="position:absolute;left:488.75px;top:167px;width:1px;height:13px;background:#e0e0e0"></div>
<div style="position:absolute;left:601.28px;top:167.69px;line-height:11px;font-size:11px;font-family:'Liberation Sans',sans-serif;font-weight:normal;color:#444;white-space:pre;">G</div>
<div style="position:absolute;left:566.625px;top:167px;width:1px;height:13px;background:#e0e0e0"></div>
<div style="position:absolute;left:679.46px;top:167.69px;line-height:11px;font-size:11px;font-family:'Liberation Sans',sans-serif;font-weight:normal;color:#444;white-space:pre;">H</div>
<div style="position:absolute;left:644.5px;top:167px;width:1px;height:13px;background:#e0e0e0"></div>
<div style="position:absolute;left:759.78px;top:167.69px;line-height:11px;font-size:11px;font-family:'Liberation Sans',sans-serif;font-weight:normal;color:#444;white-space:pre;">I</div>
<div style="position:absolute;left:722.375px;top:167px;width:1px;height:13px;background:#e0e0e0"></div>
<div style="position:absolute;left:836.44px;top:167.69px;line-height:11px;font-size:11px;font-family:'Liberation Sans',sans-serif;font-weight:normal;color:#444;white-space:pre;">J</div>
<div style="position:absolute;left:800.25px;top:167px;width:1px;height:13px;background:#e0e0e0"></div>
<div style="position:absolute;left:913.39px;top:167.69px;line-height:11px;font-size:11px;font-family:'Liberation Sans',sans-serif;font-weight:normal;color:#444;white-space:pre;">K</div>
<div style="position:absolute;left:878.125px;top:167px;width:1px;height:13px;background:#e0e0e0"></div>
<div style="position:absolute;left:991.88px;top:167.69px;line-height:11px;font-size:11px;font-family:'Liberation Sans',sans-serif;font-weight:normal;color:#444;white-space:pre;">L</div>
<div style="position:absolute;left:956.0px;top:167px;width:1px;height:13px;background:#e0e0e0"></div>
<div style="position:absolute;left:1068.23px;top:167.69px;line-height:11px;font-size:11px;font-family:'Liberation Sans',sans-serif;font-weight:normal;color:#444;white-space:pre;">M</div>
<div style="position:absolute;left:1033.875px;top:167px;width:1px;height:13px;background:#e0e0e0"></div>
<div style="position:absolute;left:1146.71px;top:167.69px;line-height:11px;font-size:11px;font-family:'Liberation Sans',sans-serif;font-weight:normal;color:#444;white-space:pre;">N</div>
<div style="position:absolute;left:1111.75px;top:167px;width:1px;height:13px;background:#e0e0e0"></div>
<div style="position:absolute;left:1224.28px;top:167.69px;line-height:11px;font-size:11px;font-family:'Liberation Sans',sans-serif;font-weight:normal;color:#444;white-space:pre;">O</div>
<div style="position:absolute;left:1189.625px;top:167px;width:1px;height:13px;background:#e0e0e0"></div>
<div style="position:absolute;left:1303.98px;top:167.69px;line-height:11px;font-size:11px;font-family:'Liberation Sans',sans-serif;font-weight:normal;color:#444;white-space:pre;">P</div>
<div style="position:absolute;left:1267.5px;top:167px;width:1px;height:13px;background:#e0e0e0"></div>
<div style="position:absolute;left:1371.72px;top:167.69px;line-height:11px;font-size:11px;font-family:'Liberation Sans',sans-serif;font-weight:normal;color:#444;white-space:pre;">Q</div>
<div style="position:absolute;left:1347.8px;top:167px;width:1px;height:13px;background:#e0e0e0"></div>
<div style="position:absolute;left:0px;top:194.1px;width:22px;height:1px;background:#e2e2e2"></div>
<div style="position:absolute;left:8.27px;top:181.78px;line-height:11.6px;font-size:11.6px;font-family:'Liberation Sans',sans-serif;font-weight:normal;color:#444;white-space:pre;">1</div>
<div style="position:absolute;left:0px;top:234.5px;width:22px;height:1px;background:#e2e2e2"></div>
<div style="position:absolute;left:8.27px;top:216.38px;line-height:11.6px;font-size:11.6px;font-family:'Liberation Sans',sans-serif;font-weight:normal;color:#444;white-space:pre;">2</div>
<div style="position:absolute;left:0px;top:270.0px;width:22px;height:1px;background:#e2e2e2"></div>
<div style="position:absolute;left:8.27px;top:257.68px;line-height:11.6px;font-size:11.6px;font-family:'Liberation Sans',sans-serif;font-weight:normal;color:#444;white-space:pre;">3</div>
<div style="position:absolute;left:0px;top:296.7px;width:22px;height:1px;background:#e2e2e2"></div>
<div style="position:absolute;left:8.27px;top:284.38px;line-height:11.6px;font-size:11.6px;font-family:'Liberation Sans',sans-serif;font-weight:normal;color:#444;white-space:pre;">4</div>
<div style="position:absolute;left:0px;top:311.7px;width:22px;height:1px;background:#e2e2e2"></div>
<div style="position:absolute;left:8.27px;top:299.38px;line-height:11.6px;font-size:11.6px;font-family:'Liberation Sans',sans-serif;font-weight:normal;color:#444;white-space:pre;">5</div>
<div style="position:absolute;left:0px;top:326.5px;width:22px;height:1px;background:#e2e2e2"></div>
<div style="position:absolute;left:8.27px;top:314.18px;line-height:11.6px;font-size:11.6px;font-family:'Liberation Sans',sans-serif;font-weight:normal;color:#444;white-space:pre;">6</div>
<div style="position:absolute;left:0px;top:341.4px;width:22px;height:1px;background:#e2e2e2"></div>
<div style="position:absolute;left:8.27px;top:329.08px;line-height:11.6px;font-size:11.6px;font-family:'Liberation Sans',sans-serif;font-weight:normal;color:#444;white-space:pre;">7</div>
<div style="position:absolute;left:0px;top:356.1px;width:22px;height:1px;background:#e2e2e2"></div>
<div style="position:absolute;left:8.27px;top:343.78px;line-height:11.6px;font-size:11.6px;font-family:'Liberation Sans',sans-serif;font-weight:normal;color:#444;white-space:pre;">8</div>
<div style="position:absolute;left:0px;top:371.9px;width:22px;height:1px;background:#e2e2e2"></div>
<div style="position:absolute;left:8.27px;top:359.58px;line-height:11.6px;font-size:11.6px;font-family:'Liberation Sans',sans-serif;font-weight:normal;color:#444;white-space:pre;">9</div>
<div style="position:absolute;left:0px;top:388.4px;width:22px;height:1px;background:#e2e2e2"></div>
<div style="position:absolute;left:5.05px;top:376.08px;line-height:11.6px;font-size:11.6px;font-family:'Liberation Sans',sans-serif;font-weight:normal;color:#444;white-space:pre;">10</div>
<div style="position:absolute;left:0px;top:404.2px;width:22px;height:1px;background:#e2e2e2"></div>
<div style="position:absolute;left:5.48px;top:391.88px;line-height:11.6px;font-size:11.6px;font-family:'Liberation Sans',sans-serif;font-weight:normal;color:#444;white-space:pre;">11</div>
<div style="position:absolute;left:0px;top:419.13px;width:22px;height:1px;background:#e2e2e2"></div>
<div style="position:absolute;left:5.05px;top:406.81px;line-height:11.6px;font-size:11.6px;font-family:'Liberation Sans',sans-serif;font-weight:normal;color:#444;white-space:pre;">12</div>
<div style="position:absolute;left:0px;top:434.06px;width:22px;height:1px;background:#e2e2e2"></div>
<div style="position:absolute;left:5.05px;top:421.74px;line-height:11.6px;font-size:11.6px;font-family:'Liberation Sans',sans-serif;font-weight:normal;color:#444;white-space:pre;">13</div>
<div style="position:absolute;left:0px;top:448.99px;width:22px;height:1px;background:#e2e2e2"></div>
<div style="position:absolute;left:5.05px;top:436.67px;line-height:11.6px;font-size:11.6px;font-family:'Liberation Sans',sans-serif;font-weight:normal;color:#444;white-space:pre;">14</div>
<div style="position:absolute;left:0px;top:463.91999999999996px;width:22px;height:1px;background:#e2e2e2"></div>
<div style="position:absolute;left:5.05px;top:451.60px;line-height:11.6px;font-size:11.6px;font-family:'Liberation Sans',sans-serif;font-weight:normal;color:#444;white-space:pre;">15</div>
<div style="position:absolute;left:0px;top:478.85px;width:22px;height:1px;background:#e2e2e2"></div>
<div style="position:absolute;left:5.05px;top:466.53px;line-height:11.6px;font-size:11.6px;font-family:'Liberation Sans',sans-serif;font-weight:normal;color:#444;white-space:pre;">16</div>
<div style="position:absolute;left:0px;top:493.78px;width:22px;height:1px;background:#e2e2e2"></div>
<div style="position:absolute;left:5.05px;top:481.46px;line-height:11.6px;font-size:11.6px;font-family:'Liberation Sans',sans-serif;font-weight:normal;color:#444;white-space:pre;">17</div>
<div style="position:absolute;left:0px;top:508.71px;width:22px;height:1px;background:#e2e2e2"></div>
<div style="position:absolute;left:5.05px;top:496.39px;line-height:11.6px;font-size:11.6px;font-family:'Liberation Sans',sans-serif;font-weight:normal;color:#444;white-space:pre;">18</div>
<div style="position:absolute;left:0px;top:523.64px;width:22px;height:1px;background:#e2e2e2"></div>
<div style="position:absolute;left:5.05px;top:511.32px;line-height:11.6px;font-size:11.6px;font-family:'Liberation Sans',sans-serif;font-weight:normal;color:#444;white-space:pre;">19</div>
<div style="position:absolute;left:0px;top:538.5699999999999px;width:22px;height:1px;background:#e2e2e2"></div>
<div style="position:absolute;left:5.05px;top:526.25px;line-height:11.6px;font-size:11.6px;font-family:'Liberation Sans',sans-serif;font-weight:normal;color:#444;white-space:pre;">20</div>
<div style="position:absolute;left:0px;top:553.5px;width:22px;height:1px;background:#e2e2e2"></div>
<div style="position:absolute;left:5.05px;top:541.18px;line-height:11.6px;font-size:11.6px;font-family:'Liberation Sans',sans-serif;font-weight:normal;color:#444;white-space:pre;">21</div>
<div style="position:absolute;left:0px;top:568.43px;width:22px;height:1px;background:#e2e2e2"></div>
<div style="position:absolute;left:5.05px;top:556.11px;line-height:11.6px;font-size:11.6px;font-family:'Liberation Sans',sans-serif;font-weight:normal;color:#444;white-space:pre;">22</div>
<div style="position:absolute;left:0px;top:583.36px;width:22px;height:1px;background:#e2e2e2"></div>
<div style="position:absolute;left:5.05px;top:571.04px;line-height:11.6px;font-size:11.6px;font-family:'Liberation Sans',sans-serif;font-weight:normal;color:#444;white-space:pre;">23</div>
<div style="position:absolute;left:0px;top:598.29px;width:22px;height:1px;background:#e2e2e2"></div>
<div style="position:absolute;left:5.05px;top:585.97px;line-height:11.6px;font-size:11.6px;font-family:'Liberation Sans',sans-serif;font-weight:normal;color:#444;white-space:pre;">24</div>
<div style="position:absolute;left:0px;top:613.22px;width:22px;height:1px;background:#e2e2e2"></div>
<div style="position:absolute;left:5.05px;top:600.90px;line-height:11.6px;font-size:11.6px;font-family:'Liberation Sans',sans-serif;font-weight:normal;color:#444;white-space:pre;">25</div>
<div style="position:absolute;left:0px;top:628.15px;width:22px;height:1px;background:#e2e2e2"></div>
<div style="position:absolute;left:5.05px;top:615.83px;line-height:11.6px;font-size:11.6px;font-family:'Liberation Sans',sans-serif;font-weight:normal;color:#444;white-space:pre;">26</div>
<div style="position:absolute;left:0px;top:643.0799999999999px;width:22px;height:1px;background:#e2e2e2"></div>
<div style="position:absolute;left:5.05px;top:630.76px;line-height:11.6px;font-size:11.6px;font-family:'Liberation Sans',sans-serif;font-weight:normal;color:#444;white-space:pre;">27</div>
<div style="position:absolute;left:0px;top:658.01px;width:22px;height:1px;background:#e2e2e2"></div>
<div style="position:absolute;left:5.05px;top:645.69px;line-height:11.6px;font-size:11.6px;font-family:'Liberation Sans',sans-serif;font-weight:normal;color:#444;white-space:pre;">28</div>
<div style="position:absolute;left:0px;top:672.94px;width:22px;height:1px;background:#e2e2e2"></div>
<div style="position:absolute;left:5.05px;top:660.62px;line-height:11.6px;font-size:11.6px;font-family:'Liberation Sans',sans-serif;font-weight:normal;color:#444;white-space:pre;">29</div>
<div style="position:absolute;left:0px;top:687.87px;width:22px;height:1px;background:#e2e2e2"></div>
<div style="position:absolute;left:5.05px;top:675.55px;line-height:11.6px;font-size:11.6px;font-family:'Liberation Sans',sans-serif;font-weight:normal;color:#444;white-space:pre;">30</div>
<div style="position:absolute;left:0px;top:702.8px;width:22px;height:1px;background:#e2e2e2"></div>
<div style="position:absolute;left:5.05px;top:690.48px;line-height:11.6px;font-size:11.6px;font-family:'Liberation Sans',sans-serif;font-weight:normal;color:#444;white-space:pre;">31</div>
<div style="position:absolute;left:0px;top:717.73px;width:22px;height:1px;background:#e2e2e2"></div>
<div style="position:absolute;left:5.05px;top:705.41px;line-height:11.6px;font-size:11.6px;font-family:'Liberation Sans',sans-serif;font-weight:normal;color:#444;white-space:pre;">32</div>
<div style="position:absolute;left:49.00px;top:201.99px;line-height:26px;font-size:26px;font-family:'Liberation Sans',sans-serif;font-weight:normal;color:#2b5687;white-space:pre;transform:scaleX(0.8996);transform-origin:0 0;">Cash Flow</div>
<div style="position:absolute;left:44px;top:235px;width:1304px;height:35.5px;background:#dadada"></div>
<div style="position:absolute;left:44px;top:235px;width:1304px;height:2px;background:#8aa2bf"></div>
<div style="position:absolute;left:44px;top:269.6px;width:1304px;height:1.9px;background:#7f93ab"></div>
<div style="position:absolute;left:248.00px;top:247.10px;line-height:13.7px;font-size:13.7px;font-family:'Liberation Sans',sans-serif;font-weight:normal;color:#333;white-space:pre;transform:scaleX(0.9914);transform-origin:0 0;">Pre-Startup</div>
<div style="position:absolute;left:346.19px;top:247.10px;line-height:13.7px;font-size:13.7px;font-family:'Liberation Sans',sans-serif;font-weight:normal;color:#333;white-space:pre;transform:scaleX(1.0411);transform-origin:0 0;">Month 1</div>
<div style="position:absolute;left:424.06px;top:247.10px;line-height:13.7px;font-size:13.7px;font-family:'Liberation Sans',sans-serif;font-weight:normal;color:#333;white-space:pre;transform:scaleX(1.0411);transform-origin:0 0;">Month 2</div>
<div style="position:absolute;left:501.94px;top:247.10px;line-height:13.7px;font-size:13.7px;font-family:'Liberation Sans',sans-serif;font-weight:normal;color:#333;white-space:pre;transform:scaleX(1.0411);transform-origin:0 0;">Month 3</div>
<div style="position:absolute;left:579.81px;top:247.10px;line-height:13.7px;font-size:13.7px;font-family:'Liberation Sans',sans-serif;font-weight:normal;color:#333;white-space:pre;transform:scaleX(1.0411);transform-origin:0 0;">Month 4</div>
<div style="position:absolute;left:657.69px;top:247.10px;line-height:13.7px;font-size:13.7px;font-family:'Liberation Sans',sans-serif;font-weight:normal;color:#333;white-space:pre;transform:scaleX(1.0411);transform-origin:0 0;">Month 5</div>
<div style="position:absolute;left:735.56px;top:247.10px;line-height:13.7px;font-size:13.7px;font-family:'Liberation Sans',sans-serif;font-weight:normal;color:#333;white-space:pre;transform:scaleX(1.0411);transform-origin:0 0;">Month 6</div>
<div style="position:absolute;left:813.44px;top:247.10px;line-height:13.7px;font-size:13.7px;font-family:'Liberation Sans',sans-serif;font-weight:normal;color:#333;white-space:pre;transform:scaleX(1.0411);transform-origin:0 0;">Month 7</div>
<div style="position:absolute;left:891.31px;top:247.10px;line-height:13.7px;font-size:13.7px;font-family:'Liberation Sans',sans-serif;font-weight:normal;color:#333;white-space:pre;transform:scaleX(1.0411);transform-origin:0 0;">Month 8</div>
<div style="position:absolute;left:969.19px;top:247.10px;line-height:13.7px;font-size:13.7px;font-family:'Liberation Sans',sans-serif;font-weight:normal;color:#333;white-space:pre;transform:scaleX(1.0411);transform-origin:0 0;">Month 9</div>
<div style="position:absolute;left:1043.56px;top:247.10px;line-height:13.7px;font-size:13.7px;font-family:'Liberation Sans',sans-serif;font-weight:normal;color:#333;white-space:pre;transform:scaleX(1.0249);transform-origin:0 0;">Month 10</div>
<div style="position:absolute;left:1121.44px;top:247.10px;line-height:13.7px;font-size:13.7px;font-family:'Liberation Sans',sans-serif;font-weight:normal;color:#333;white-space:pre;transform:scaleX(1.0435);transform-origin:0 0;">Month 11</div>
<div style="position:absolute;left:1199.31px;top:247.10px;line-height:13.7px;font-size:13.7px;font-family:'Liberation Sans',sans-serif;font-weight:normal;color:#333;white-space:pre;transform:scaleX(1.0249);transform-origin:0 0;">Month 12</div>
<div style="position:absolute;left:1287.60px;top:247.10px;line-height:13.7px;font-size:13.7px;font-family:'Liberation Sans',sans-serif;font-weight:normal;color:#333;white-space:pre;transform:scaleX(0.9333);transform-origin:0 0;">TOTAL</div>
<div style="position:absolute;left:332.5px;top:271px;width:1.5px;height:438px;background:#4a4a4a"></div>
<div style="position:absolute;left:1267px;top:271px;width:1.2px;height:438px;background:#222"></div>
<div style="position:absolute;left:1268px;top:271px;width:80px;height:26.5px;background:#dadada"></div>
<div style="position:absolute;left:231px;top:311.8px;width:101.5px;height:30.3px;background:#dadada"></div>
<div style="position:absolute;left:1268px;top:373.5px;width:80px;height:15px;background:#dadada"></div>
<div style="position:absolute;left:231px;top:356px;width:1117px;height:1px;background:#7a7a7a"></div>
<div style="position:absolute;left:44px;top:371px;width:1304px;height:1px;background:#6a6a6a"></div>
<div style="position:absolute;left:44px;top:373px;width:1304px;height:1px;background:#8a8a8a"></div>
<div style="position:absolute;left:44px;top:388px;width:1304px;height:2.5px;background:#9c9c9c"></div>
<div style="position:absolute;left:44px;top:687.3px;width:1304px;height:1.6px;background:#6f6f6f"></div>
<div style="position:absolute;left:44px;top:703px;width:1304px;height:1.6px;background:#6f6f6f"></div>
<div style="position:absolute;left:46.40px;top:273.38px;line-height:9px;font-size:9px;font-family:'Liberation Sans',sans-serif;font-weight:bold;color:#222;white-space:pre;">1. CASH ON HAND</div>
<div style="position:absolute;left:46.40px;top:285.96px;line-height:9.5px;font-size:9.5px;font-family:'Liberation Sans',sans-serif;font-weight:normal;color:#222;white-space:pre;transform:scaleX(0.9810);transform-origin:0 0;">[Beginning of month]</div>
<div style="position:absolute;left:46.40px;top:301.58px;line-height:9px;font-size:9px;font-family:'Liberation Sans',sans-serif;font-weight:bold;color:#222;white-space:pre;transform:scaleX(1.0117);transform-origin:0 0;">2. CASH RECEIPTS</div>
<div style="position:absolute;left:46.40px;top:361.78px;line-height:9px;font-size:9px;font-family:'Liberation Sans',sans-serif;font-weight:bold;color:#222;white-space:pre;transform:scaleX(1.0390);transform-origin:0 0;">3. TOTAL CASH RECEIPTS</div>
<div style="position:absolute;left:46.40px;top:378.28px;line-height:9px;font-size:9px;font-family:'Liberation Sans',sans-serif;font-weight:bold;color:#222;white-space:pre;transform:scaleX(1.0809);transform-origin:0 0;">4. TOTAL CASH AVAILABLE</div>
<div style="position:absolute;left:46.40px;top:394.08px;line-height:9px;font-size:9px;font-family:'Liberation Sans',sans-serif;font-weight:bold;color:#222;white-space:pre;transform:scaleX(1.0331);transform-origin:0 0;">5. CASH PAID OUT</div>
<div style="position:absolute;left:57.20px;top:315.87px;line-height:9.6px;font-size:9.6px;font-family:'Liberation Sans',sans-serif;font-weight:normal;color:#1a1a1a;white-space:pre;transform:scaleX(0.9739);transform-origin:0 0;">(a) Cash Sales</div>
<div style="position:absolute;left:57.20px;top:330.77px;line-height:9.6px;font-size:9.6px;font-family:'Liberation Sans',sans-serif;font-weight:normal;color:#1a1a1a;white-space:pre;">(b) Collections from Credit Accounts</div>
<div style="position:absolute;left:57.20px;top:345.47px;line-height:9.6px;font-size:9.6px;font-family:'Liberation Sans',sans-serif;font-weight:normal;color:#1a1a1a;white-space:pre;transform:scaleX(0.9801);transform-origin:0 0;">(c) Loan or Other Cash Injection</div>
<div style="position:absolute;left:57.20px;top:408.50px;line-height:9.6px;font-size:9.6px;font-family:'Liberation Sans',sans-serif;font-weight:normal;color:#1a1a1a;white-space:pre;">(a) Purchases (Merchandise)</div>
<div style="position:absolute;left:57.20px;top:423.43px;line-height:9.6px;font-size:9.6px;font-family:'Liberation Sans',sans-serif;font-weight:normal;color:#1a1a1a;white-space:pre;transform:scaleX(1.0311);transform-origin:0 0;">(b) Gross Wages (excludes withdrawals)</div>
<div style="position:absolute;left:57.20px;top:438.36px;line-height:9.6px;font-size:9.6px;font-family:'Liberation Sans',sans-serif;font-weight:normal;color:#1a1a1a;white-space:pre;transform:scaleX(1.0099);transform-origin:0 0;">(c) Payroll Expenses (Taxes, etc.)</div>
<div style="position:absolute;left:57.20px;top:453.29px;line-height:9.6px;font-size:9.6px;font-family:'Liberation Sans',sans-serif;font-weight:normal;color:#1a1a1a;white-space:pre;">(d) Outside Services</div>
<div style="position:absolute;left:57.20px;top:468.22px;line-height:9.6px;font-size:9.6px;font-family:'Liberation Sans',sans-serif;font-weight:normal;color:#1a1a1a;white-space:pre;">(e) Supplies (Office and operating)</div>
<div style="position:absolute;left:57.20px;top:483.15px;line-height:9.6px;font-size:9.6px;font-family:'Liberation Sans',sans-serif;font-weight:normal;color:#1a1a1a;white-space:pre;transform:scaleX(0.9830);transform-origin:0 0;">(f) Repairs and Maintenance</div>
<div style="position:absolute;left:57.20px;top:498.08px;line-height:9.6px;font-size:9.6px;font-family:'Liberation Sans',sans-serif;font-weight:normal;color:#1a1a1a;white-space:pre;transform:scaleX(1.0207);transform-origin:0 0;">(g) Advertising</div>
<div style="position:absolute;left:57.20px;top:513.01px;line-height:9.6px;font-size:9.6px;font-family:'Liberation Sans',sans-serif;font-weight:normal;color:#1a1a1a;white-space:pre;transform:scaleX(1.0114);transform-origin:0 0;">(h) Auto, Delivery, and Travel</div>
<div style="position:absolute;left:57.20px;top:527.94px;line-height:9.6px;font-size:9.6px;font-family:'Liberation Sans',sans-serif;font-weight:normal;color:#1a1a1a;white-space:pre;">(i) Accounting and Legal</div>
<div style="position:absolute;left:57.20px;top:542.87px;line-height:9.6px;font-size:9.6px;font-family:'Liberation Sans',sans-serif;font-weight:normal;color:#1a1a1a;white-space:pre;transform:scaleX(0.9570);transform-origin:0 0;">(j) Rent</div>
<div style="position:absolute;left:57.20px;top:557.80px;line-height:9.6px;font-size:9.6px;font-family:'Liberation Sans',sans-serif;font-weight:normal;color:#1a1a1a;white-space:pre;transform:scaleX(0.9867);transform-origin:0 0;">(k) Telephone</div>
<div style="position:absolute;left:57.20px;top:572.73px;line-height:9.6px;font-size:9.6px;font-family:'Liberation Sans',sans-serif;font-weight:normal;color:#1a1a1a;white-space:pre;transform:scaleX(0.9404);transform-origin:0 0;">(l) Utilities</div>
<div style="position:absolute;left:57.20px;top:587.66px;line-height:9.6px;font-size:9.6px;font-family:'Liberation Sans',sans-serif;font-weight:normal;color:#1a1a1a;white-space:pre;transform:scaleX(0.9850);transform-origin:0 0;">(m) Insurance</div>
<div style="position:absolute;left:57.20px;top:602.59px;line-height:9.6px;font-size:9.6px;font-family:'Liberation Sans',sans-serif;font-weight:normal;color:#1a1a1a;white-space:pre;">(n) Taxes (Real Estate, etc.)</div>
<div style="position:absolute;left:57.20px;top:617.52px;line-height:9.6px;font-size:9.6px;font-family:'Liberation Sans',sans-serif;font-weight:normal;color:#1a1a1a;white-space:pre;">(o) Interest</div>
<div style="position:absolute;left:57.20px;top:632.45px;line-height:9.6px;font-size:9.6px;font-family:'Liberation Sans',sans-serif;font-weight:normal;color:#1a1a1a;white-space:pre;">(p) Other Expenses [Specify each]</div>
<div style="position:absolute;left:57.20px;top:677.24px;line-height:9.6px;font-size:9.6px;font-family:'Liberation Sans',sans-serif;font-weight:normal;color:#1a1a1a;white-space:pre;transform:scaleX(0.9849);transform-origin:0 0;">(q) Miscellaneous [Unspecified]</div>
<div style="position:absolute;left:57.20px;top:692.17px;line-height:9.6px;font-size:9.6px;font-family:'Liberation Sans',sans-serif;font-weight:normal;color:#1a1a1a;white-space:pre;transform:scaleX(0.9901);transform-origin:0 0;">(r) Subtotal</div>
<div style="position:absolute;left:391px;top:291.2px;width:4px;height:1.3px;background:#9a9a9a"></div>
<div style="position:absolute;left:469px;top:291.2px;width:4px;height:1.3px;background:#9a9a9a"></div>
<div style="position:absolute;left:547px;top:291.2px;width:4px;height:1.3px;background:#9a9a9a"></div>
<div style="position:absolute;left:624px;top:291.2px;width:4px;height:1.3px;background:#9a9a9a"></div>
<div style="position:absolute;left:702px;top:291.2px;width:4px;height:1.3px;background:#9a9a9a"></div>
<div style="position:absolute;left:780px;top:291.2px;width:4px;height:1.3px;background:#9a9a9a"></div>
<div style="position:absolute;left:858px;top:291.2px;width:4px;height:1.3px;background:#9a9a9a"></div>
<div style="position:absolute;left:936px;top:291.2px;width:4px;height:1.3px;background:#9a9a9a"></div>
<div style="position:absolute;left:1014px;top:291.2px;width:4px;height:1.3px;background:#9a9a9a"></div>
<div style="position:absolute;left:1092px;top:291.2px;width:4px;height:1.3px;background:#9a9a9a"></div>
<div style="position:absolute;left:1170px;top:291.2px;width:4px;height:1.3px;background:#9a9a9a"></div>
<div style="position:absolute;left:1248px;top:291.2px;width:4px;height:1.3px;background:#9a9a9a"></div>
<div style="position:absolute;left:391px;top:366.2px;width:4px;height:1.3px;background:#333"></div>
<div style="position:absolute;left:469px;top:366.2px;width:4px;height:1.3px;background:#333"></div>
<div style="position:absolute;left:547px;top:366.2px;width:4px;height:1.3px;background:#333"></div>
<div style="position:absolute;left:624px;top:366.2px;width:4px;height:1.3px;background:#333"></div>
<div style="position:absolute;left:702px;top:366.2px;width:4px;height:1.3px;background:#333"></div>
<div style="position:absolute;left:780px;top:366.2px;width:4px;height:1.3px;background:#333"></div>
<div style="position:absolute;left:858px;top:366.2px;width:4px;height:1.3px;background:#333"></div>
<div style="position:absolute;left:936px;top:366.2px;width:4px;height:1.3px;background:#333"></div>
<div style="position:absolute;left:1014px;top:366.2px;width:4px;height:1.3px;background:#333"></div>
<div style="position:absolute;left:1092px;top:366.2px;width:4px;height:1.3px;background:#333"></div>
<div style="position:absolute;left:1170px;top:366.2px;width:4px;height:1.3px;background:#333"></div>
<div style="position:absolute;left:1248px;top:366.2px;width:4px;height:1.3px;background:#333"></div>
<div style="position:absolute;left:391px;top:382.2px;width:4px;height:1.3px;background:#9a9a9a"></div>
<div style="position:absolute;left:469px;top:382.2px;width:4px;height:1.3px;background:#9a9a9a"></div>
<div style="position:absolute;left:547px;top:382.2px;width:4px;height:1.3px;background:#9a9a9a"></div>
<div style="position:absolute;left:624px;top:382.2px;width:4px;height:1.3px;background:#9a9a9a"></div>
<div style="position:absolute;left:702px;top:382.2px;width:4px;height:1.3px;background:#9a9a9a"></div>
<div style="position:absolute;left:780px;top:382.2px;width:4px;height:1.3px;background:#9a9a9a"></div>
<div style="position:absolute;left:858px;top:382.2px;width:4px;height:1.3px;background:#9a9a9a"></div>
<div style="position:absolute;left:936px;top:382.2px;width:4px;height:1.3px;background:#9a9a9a"></div>
<div style="position:absolute;left:1014px;top:382.2px;width:4px;height:1.3px;background:#9a9a9a"></div>
<div style="position:absolute;left:1092px;top:382.2px;width:4px;height:1.3px;background:#9a9a9a"></div>
<div style="position:absolute;left:1170px;top:382.2px;width:4px;height:1.3px;background:#9a9a9a"></div>
<div style="position:absolute;left:1248px;top:382.2px;width:4px;height:1.3px;background:#9a9a9a"></div>
<div style="position:absolute;left:391px;top:697.2px;width:4px;height:1.3px;background:#9a9a9a"></div>
<div style="position:absolute;left:469px;top:697.2px;width:4px;height:1.3px;background:#9a9a9a"></div>
<div style="position:absolute;left:547px;top:697.2px;width:4px;height:1.3px;background:#9a9a9a"></div>
<div style="position:absolute;left:624px;top:697.2px;width:4px;height:1.3px;background:#9a9a9a"></div>
<div style="position:absolute;left:702px;top:697.2px;width:4px;height:1.3px;background:#9a9a9a"></div>
<div style="position:absolute;left:780px;top:697.2px;width:4px;height:1.3px;background:#9a9a9a"></div>
<div style="position:absolute;left:858px;top:697.2px;width:4px;height:1.3px;background:#9a9a9a"></div>
<div style="position:absolute;left:936px;top:697.2px;width:4px;height:1.3px;background:#9a9a9a"></div>
<div style="position:absolute;left:1014px;top:697.2px;width:4px;height:1.3px;background:#9a9a9a"></div>
<div style="position:absolute;left:1092px;top:697.2px;width:4px;height:1.3px;background:#9a9a9a"></div>
<div style="position:absolute;left:1170px;top:697.2px;width:4px;height:1.3px;background:#9a9a9a"></div>
<div style="position:absolute;left:1248px;top:697.2px;width:4px;height:1.3px;background:#9a9a9a"></div>
<div style="position:absolute;left:313px;top:366.2px;width:4px;height:1.3px;background:#333"></div>
<div style="position:absolute;left:313px;top:382.2px;width:4px;height:1.3px;background:#9a9a9a"></div>
<div style="position:absolute;left:313px;top:697.2px;width:4px;height:1.3px;background:#9a9a9a"></div>
<div style="position:absolute;left:1328px;top:320.2px;width:4px;height:1.3px;background:#3a3a3a"></div>
<div style="position:absolute;left:1328px;top:335.2px;width:4px;height:1.3px;background:#3a3a3a"></div>
<div style="position:absolute;left:1328px;top:350.2px;width:4px;height:1.3px;background:#3a3a3a"></div>
<div style="position:absolute;left:1328px;top:366.2px;width:4px;height:1.3px;background:#3a3a3a"></div>
<div style="position:absolute;left:1328px;top:413.2px;width:4px;height:1.3px;background:#3a3a3a"></div>
<div style="position:absolute;left:1328px;top:428.2px;width:4px;height:1.3px;background:#3a3a3a"></div>
<div style="position:absolute;left:1328px;top:443.2px;width:4px;height:1.3px;background:#3a3a3a"></div>
<div style="position:absolute;left:1328px;top:458.2px;width:4px;height:1.3px;background:#3a3a3a"></div>
<div style="position:absolute;left:1328px;top:473.2px;width:4px;height:1.3px;background:#3a3a3a"></div>
<div style="position:absolute;left:1328px;top:487.2px;width:4px;height:1.3px;background:#3a3a3a"></div>
<div style="position:absolute;left:1328px;top:502.2px;width:4px;height:1.3px;background:#3a3a3a"></div>
<div style="position:absolute;left:1328px;top:517.2px;width:4px;height:1.3px;background:#3a3a3a"></div>
<div style="position:absolute;left:1328px;top:532.2px;width:4px;height:1.3px;background:#3a3a3a"></div>
<div style="position:absolute;left:1328px;top:547.2px;width:4px;height:1.3px;background:#3a3a3a"></div>
<div style="position:absolute;left:1328px;top:562.2px;width:4px;height:1.3px;background:#3a3a3a"></div>
<div style="position:absolute;left:1328px;top:577.2px;width:4px;height:1.3px;background:#3a3a3a"></div>
<div style="position:absolute;left:1328px;top:592.2px;width:4px;height:1.3px;background:#3a3a3a"></div>
<div style="position:absolute;left:1328px;top:607.2px;width:4px;height:1.3px;background:#3a3a3a"></div>
<div style="position:absolute;left:1328px;top:622.2px;width:4px;height:1.3px;background:#3a3a3a"></div>
<div style="position:absolute;left:1328px;top:637.2px;width:4px;height:1.3px;background:#3a3a3a"></div>
<div style="position:absolute;left:1328px;top:667.2px;width:4px;height:1.3px;background:#3a3a3a"></div>
<div style="position:absolute;left:1328px;top:682.2px;width:4px;height:1.3px;background:#3a3a3a"></div>
<div style="position:absolute;left:1328px;top:697.2px;width:4px;height:1.3px;background:#9a9a9a"></div>
<div style="position:absolute;left:1384px;top:167px;width:13.5px;height:13px;box-sizing:border-box;border:1px solid #cfcfcf;background:#fff"></div>
<svg style="position:absolute;left:1386px;top:170px" width="10" height="7" viewBox="0 0 10 7"><path d="M1.5 5 L5 1.5 L8.5 5 Z" fill="#666"/></svg>
<div style="position:absolute;left:1384px;top:180px;width:13.5px;height:529px;background:#ece9ec"></div>
<div style="position:absolute;left:1384px;top:180px;width:13.5px;height:204px;box-sizing:border-box;border:1px solid #cdcdcd;background:#fff"></div>
<div style="position:absolute;left:1384px;top:697.5px;width:13.5px;height:12px;box-sizing:border-box;border:1px solid #cfcfcf;background:#fff"></div>
<svg style="position:absolute;left:1386px;top:700px" width="10" height="7" viewBox="0 0 10 7"><path d="M1.5 2 L5 5.5 L8.5 2 Z" fill="#666"/></svg>
<div style="position:absolute;left:1381.5px;top:180px;width:2.5px;height:529px;background:#fdfefd"></div>
<div style="position:absolute;left:1381.5px;top:180px;width:1px;height:529px;background:#c8c8c8"></div>
<div style="position:absolute;left:0px;top:709px;width:1400px;height:24.5px;background:#efedf0"></div>
<div style="position:absolute;left:0px;top:709px;width:1382px;height:1px;background:#c6c6c6"></div>
<div style="position:absolute;left:87.5px;top:709px;width:183.5px;height:22.5px;background:#fdfefd;box-sizing:border-box;border-left:1px solid #c6c6c6;border-right:1px solid #c6c6c6"></div>
<div style="position:absolute;left:88px;top:729.2px;width:183px;height:2px;background:#217346"></div>
<div style="position:absolute;left:98.00px;top:715.02px;line-height:11.2px;font-size:11.2px;font-family:'Liberation Sans',sans-serif;font-weight:bold;color:#217346;white-space:pre;">Cash Flow and Profit and Loss</div>
<svg style="position:absolute;left:20px;top:714px" width="40" height="14" viewBox="0 0 40 14"><path d="M7 4 L3 7.5 L7 11 Z" fill="#c4c4c4"/><path d="M28.5 4 L32.5 7.5 L28.5 11 Z" fill="#c4c4c4"/></svg>
<svg style="position:absolute;left:298px;top:712px" width="18" height="18" viewBox="0 0 18 18"><circle cx="9" cy="9" r="7.2" fill="none" stroke="#777" stroke-width="1.3"/><path d="M9 5v8M5 9h8" stroke="#666" stroke-width="1.5"/></svg>
<svg style="position:absolute;left:838px;top:715px" width="6" height="14" viewBox="0 0 6 14"><circle cx="3" cy="2.5" r="0.9" fill="#999"/><circle cx="3" cy="6" r="0.9" fill="#999"/><circle cx="3" cy="9.5" r="0.9" fill="#999"/></svg>
<div style="position:absolute;left:855.5px;top:715.5px;width:481.5px;height:13px;box-sizing:border-box;border:1px solid #cdcdcd;background:#fff"></div>
<div style="position:absolute;left:868px;top:715.5px;width:1px;height:13px;background:#cdcdcd"></div>
<svg style="position:absolute;left:858px;top:717px" width="10" height="10" viewBox="0 0 10 10"><path d="M6.5 1.5 L2.5 5 L6.5 8.5 Z" fill="#555"/></svg>
<div style="position:absolute;left:1368.5px;top:715.5px;width:13.5px;height:13px;box-sizing:border-box;border:1px solid #cfcfcf;background:#fff"></div>
<svg style="position:absolute;left:1371px;top:717px" width="10" height="10" viewBox="0 0 10 10"><path d="M3.5 1.5 L7.5 5 L3.5 8.5 Z" fill="#555"/></svg>
<div style="position:absolute;left:0px;top:733.5px;width:1400px;height:19px;background:#217346"></div>
<div style="position:absolute;left:6.00px;top:739.53px;line-height:10px;font-size:10px;font-family:'Liberation Sans',sans-serif;font-weight:normal;color:#fff;white-space:pre;transform:scaleX(0.8417);transform-origin:0 0;">READY</div>
<div style="position:absolute;left:1144.5px;top:733.3px;width:33.5px;height:19px;background:#1a6439"></div>
<svg style="position:absolute;left:52px;top:736px" width="14" height="14" viewBox="0 0 14 14"><circle cx="4" cy="3.5" r="2.8" fill="#fff"/><rect x="1" y="6" width="12" height="7.5" fill="none" stroke="#fff"/><path d="M4 6v7.5M7.5 6v7.5M10.5 6v7.5M1 8.5h12M1 11h12" stroke="#fff" stroke-width="0.8"/></svg>
<svg style="position:absolute;left:1154px;top:737px" width="14" height="13" viewBox="0 0 14 13"><path d="M0.5 0.5h12v12h-12zM4.5 0.5v12M8.5 0.5v12M0.5 4.5h12M0.5 8.5h12" fill="none" stroke="#fff"/></svg>
<svg style="position:absolute;left:1187px;top:737px" width="14" height="13" viewBox="0 0 14 13"><rect x="0.5" y="0.5" width="12" height="12" fill="none" stroke="#e0ece4"/><rect x="3.5" y="3.5" width="6" height="6" fill="none" stroke="#e0ece4"/></svg>
<svg style="position:absolute;left:1220px;top:737px" width="14" height="13" viewBox="0 0 14 13"><rect x="0.5" y="0.5" width="12" height="12" fill="none" stroke="#e0ece4"/><rect x="2" y="1" width="3.5" height="6" fill="#fff"/><rect x="7" y="1" width="3.5" height="6" fill="#fff"/></svg>
<div style="position:absolute;left:1370.00px;top:739.11px;line-height:10.5px;font-size:10.5px;font-family:'Liberation Sans',sans-serif;font-weight:normal;color:#fff;white-space:pre;transform:scaleX(0.8563);transform-origin:0 0;">100%</div>
<div style="position:absolute;left:1257px;top:741.5px;width:88px;height:1px;background:#d8e8de"></div>
<div style="position:absolute;left:1299px;top:737px;width:4px;height:10px;background:#fff"></div>
<div style="position:absolute;left:1248px;top:741.5px;width:5px;height:1.5px;background:#fff"></div>
<div style="position:absolute;left:1348px;top:741.5px;width:8px;height:1.5px;background:#fff"></div>
<div style="position:absolute;left:1351.2px;top:738.2px;width:1.5px;height:8px;background:#fff"></div>
</body></html>
